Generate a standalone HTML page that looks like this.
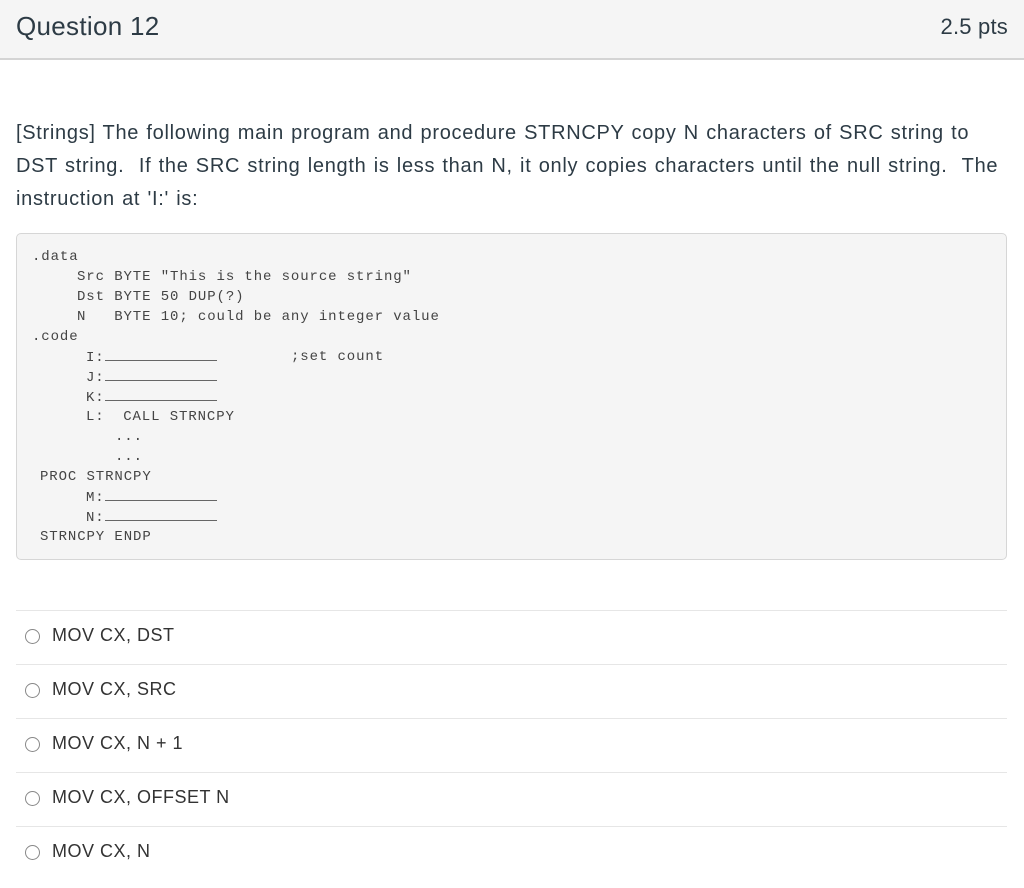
<!DOCTYPE html>
<html><head><style>
body{margin:0;width:1024px;height:888px;background:#fff;position:relative;overflow:hidden;font-family:"Liberation Sans",sans-serif;color:#2d3b45}
.hdr{position:absolute;left:0;top:0;width:1024px;height:58px;background:#f5f5f5;border-bottom:2px solid #d4d4d4}
.hdr .t{position:absolute;left:16px;top:11px;font-size:26px;letter-spacing:0.3px;color:#2d3b45}
.hdr .p{position:absolute;right:16px;top:14px;font-size:22px;letter-spacing:0.2px;color:#2d3b45}
.q{position:absolute;left:16px;top:117px;width:1000px;font-size:20px;line-height:33px;letter-spacing:0.7px;word-spacing:1px;color:#2d3b45;white-space:nowrap}
.code{position:absolute;left:16px;top:233px;width:989px;height:325px;background:#f5f5f5;border:1px solid #d6d6d6;border-radius:5px}
.l{position:absolute;font-family:"Liberation Mono",monospace;font-size:14px;color:#444;white-space:pre;letter-spacing:0.9px}
.u{display:inline-block;width:112px;border-bottom:1px solid #666;height:11px;vertical-align:baseline}
.sep{position:absolute;left:16px;width:991px;height:1px;background:#e6e6e6}
.opt{position:absolute;left:52px;font-size:18px;color:#333;letter-spacing:0.5px}
.r{position:absolute;left:25px;width:13px;height:13px;border:1px solid #888;border-radius:50%}
</style></head><body>
<div class="hdr"><div class="t">Question 12</div><div class="p">2.5 pts</div></div>
<div class="q">[Strings] The following main program and procedure STRNCPY copy N characters of SRC string to<br>DST string.&nbsp; If the SRC string length is less than N, it only copies characters until the null string.&nbsp; The<br>instruction at 'I:' is:</div>
<div class="code"></div>
<div class="l" style="left:32px;top:249px">.data</div>
<div class="l" style="left:77px;top:269px">Src BYTE "This is the source string"</div>
<div class="l" style="left:77px;top:289px">Dst BYTE 50 DUP(?)</div>
<div class="l" style="left:77px;top:309px">N   BYTE 10; could be any integer value</div>
<div class="l" style="left:32px;top:329px">.code</div>
<div class="l" style="left:86px;top:349px">I:<span class="u"></span></div>
<div class="l" style="left:291px;top:349px">;set count</div>
<div class="l" style="left:86px;top:369px">J:<span class="u"></span></div>
<div class="l" style="left:86px;top:389px">K:<span class="u"></span></div>
<div class="l" style="left:86px;top:409px">L:  CALL STRNCPY</div>
<div class="l" style="left:115px;top:429px">...</div>
<div class="l" style="left:115px;top:449px">...</div>
<div class="l" style="left:40px;top:469px">PROC STRNCPY</div>
<div class="l" style="left:86px;top:489px">M:<span class="u"></span></div>
<div class="l" style="left:86px;top:509px">N:<span class="u"></span></div>
<div class="l" style="left:40px;top:529px">STRNCPY ENDP</div>
<div class="sep" style="top:610px"></div>
<div class="r" style="top:629px"></div><div class="opt" style="top:625px">MOV CX, DST</div>
<div class="sep" style="top:664px"></div>
<div class="r" style="top:683px"></div><div class="opt" style="top:679px">MOV CX, SRC</div>
<div class="sep" style="top:718px"></div>
<div class="r" style="top:737px"></div><div class="opt" style="top:733px">MOV CX, N + 1</div>
<div class="sep" style="top:772px"></div>
<div class="r" style="top:791px"></div><div class="opt" style="top:787px">MOV CX, OFFSET N</div>
<div class="sep" style="top:826px"></div>
<div class="r" style="top:845px"></div><div class="opt" style="top:841px">MOV CX, N</div>
</body></html>
